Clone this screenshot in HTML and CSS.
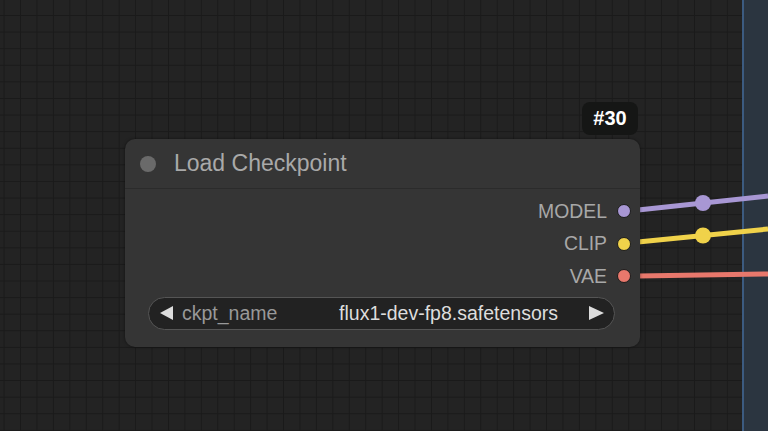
FILE: index.html
```html
<!DOCTYPE html>
<html lang="en">
<head>
    <meta charset="UTF-8">
    <meta name="viewport" content="width=device-width, initial-scale=1.0">
    <title>Load Checkpoint</title>
    <link rel="stylesheet" href="styles.css">
</head>
<body>
    <div class="canvas">
        <div class="side-panel"></div>

        <!-- links leaving the node -->
        <svg class="links" width="768" height="431" viewBox="0 0 768 431">
            <line x1="638" y1="210" x2="768" y2="196" stroke="#a897d4" stroke-width="5"/>
            <circle cx="703" cy="203" r="8" fill="#a897d4"/>
            <line x1="638" y1="242" x2="768" y2="229" stroke="#f0d24a" stroke-width="5"/>
            <circle cx="703" cy="235.5" r="8" fill="#f0d24a"/>
            <line x1="638" y1="276" x2="768" y2="274" stroke="#e8786c" stroke-width="5"/>
        </svg>

        <div class="badge">#30</div>

        <div class="node">
            <div class="node-header">
                <span class="node-dot"></span>
                <span class="node-title">Load Checkpoint</span>
            </div>
            <div class="outputs">
                <div class="output">MODEL <span class="slot slot-model"></span></div>
                <div class="output">CLIP <span class="slot slot-clip"></span></div>
                <div class="output">VAE <span class="slot slot-vae"></span></div>
            </div>
            <div class="widget">
                <span class="arrow arrow-left"></span>
                <span class="widget-label">ckpt_name</span>
                <span class="widget-value">flux1-dev-fp8.safetensors</span>
                <span class="arrow arrow-right"></span>
            </div>
        </div>
    </div>
</body>
</html>
```

FILE: styles.css
```css
* {
    margin: 0;
    padding: 0;
    box-sizing: border-box;
    font-family: "Liberation Sans", Arial, sans-serif;
}

body {
    background-color: #222;
    overflow: hidden;
}

.canvas {
    position: relative;
    width: 768px;
    height: 431px;
    background-color: #232323;
    background-image:
        linear-gradient(to right, #1a1a1a 1px, transparent 1px),
        linear-gradient(to bottom, #1a1a1a 1px, transparent 1px);
    background-size: 16.45px 16.6px;
    background-position: 3.6px 15px;
}

.side-panel {
    position: absolute;
    top: 0;
    right: 0;
    width: 26px;
    height: 431px;
    background: #2b3540;
    border-left: 2px solid #3c5b80;
}

.links {
    position: absolute;
    top: 0;
    left: 0;
}

.badge {
    position: absolute;
    left: 582px;
    top: 102px;
    width: 56px;
    height: 33px;
    border-radius: 8px;
    background: #151615;
    color: #fff;
    font-size: 20px;
    font-weight: bold;
    display: flex;
    align-items: center;
    justify-content: center;
}

.node {
    position: absolute;
    left: 125px;
    top: 139px;
    width: 515px;
    height: 208px;
    background: #353535;
    border-radius: 10px;
    box-shadow: 0 0 3px rgba(0, 0, 0, 0.5);
}

.node-header {
    height: 50px;
    display: flex;
    align-items: center;
    padding-left: 15px;
    border-bottom: 1px solid #2b2b2b;
}

.node-dot {
    width: 16px;
    height: 16px;
    border-radius: 50%;
    background: #6a6a6a;
    margin-right: 18px;
}

.node-title {
    color: #a9a9a9;
    font-size: 23px;
}

.outputs {
    padding-top: 6px;
}

.output {
    height: 32.5px;
    display: flex;
    align-items: center;
    justify-content: flex-end;
    padding-right: 9px;
    color: #a8a8a8;
    font-size: 19.4px;
}

.slot {
    width: 14px;
    height: 14px;
    border-radius: 50%;
    margin-left: 10px;
    border: 1.5px solid #1c1c1c;
}

.slot-model {
    background: #a897d4;
}

.slot-clip {
    background: #f0d24a;
}

.slot-vae {
    background: #e8786c;
}

.widget {
    margin: 4px 25px 0 23px;
    height: 33px;
    border-radius: 17px;
    background: #222;
    border: 1.5px solid #555;
    display: flex;
    align-items: center;
    padding: 0 10px 0 11px;
    font-size: 19.5px;
}

.arrow {
    width: 0;
    height: 0;
    border-top: 7.5px solid transparent;
    border-bottom: 7.5px solid transparent;
}

.arrow-left {
    border-right: 13px solid #ddd;
}

.arrow-right {
    border-left: 15px solid #ddd;
}

.widget-label {
    color: #999;
    margin-left: 9px;
    flex: 1;
}

.widget-value {
    color: #ddd;
    margin-right: 31px;
}
```
